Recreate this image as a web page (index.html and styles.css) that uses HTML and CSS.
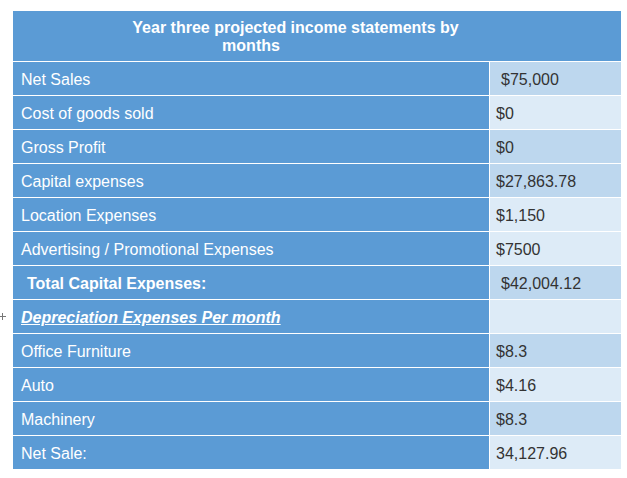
FILE: index.html
```html
<!DOCTYPE html>
<html>
<head>
<meta charset="utf-8">
<link rel="stylesheet" href="styles.css">
</head>
<body>
<div class="wrap">
  <svg class="handle" width="8" height="9" viewBox="0 0 8 9"><path d="M0 4.5H7M3.5 1V8" stroke="#777" stroke-width="1"/></svg>
  <div class="table">
    <div class="head">
      <div class="title">
        <span class="l1">Year three projected income statements by</span>
        <span class="l2">months</span>
      </div>
    </div>
    <div class="lab">Net Sales</div><div class="val a indent">$75,000</div>
    <div class="lab">Cost of goods sold</div><div class="val b">$0</div>
    <div class="lab">Gross Profit</div><div class="val a">$0</div>
    <div class="lab">Capital expenses</div><div class="val a">$27,863.78</div>
    <div class="lab">Location Expenses</div><div class="val b">$1,150</div>
    <div class="lab">Advertising / Promotional Expenses</div><div class="val b">$7500</div>
    <div class="lab bold indent">Total Capital Expenses:</div><div class="val a indent">$42,004.12</div>
    <div class="lab dep">Depreciation Expenses Per month</div><div class="val b"></div>
    <div class="lab">Office Furniture</div><div class="val a">$8.3</div>
    <div class="lab">Auto</div><div class="val b">$4.16</div>
    <div class="lab">Machinery</div><div class="val a">$8.3</div>
    <div class="lab">Net Sale:</div><div class="val b">34,127.96</div>
  </div>
</div>
</body>
</html>
```
FILE: styles.css
```css
html, body {
  margin: 0;
  padding: 0;
  background: #ffffff;
}
body {
  font-family: "Liberation Sans", Arial, sans-serif;
  font-size: 16px;
}
.wrap {
  position: relative;
  padding: 11px 0 0 13px;
}
.handle {
  position: absolute;
  left: -1px;
  top: 312px;
}
.table {
  width: 608px;
  display: grid;
  grid-template-columns: 476px 131px;
  grid-template-rows: 50px;
  grid-auto-rows: 33px;
  gap: 1px;
  background: #ffffff;
}
.head {
  grid-column: 1 / 3;
  background: #5b9bd5;
  color: #ffffff;
  font-weight: bold;
  line-height: 18px;
  display: flex;
  align-items: center;
  padding-top: 2px;
  box-sizing: border-box;
}
.title {
  width: 476px;
  text-align: center;
}
.l1 { display: block; padding-left: 89px; }
.l2 { display: block; }
.lab {
  background: #5b9bd5;
  color: #ffffff;
  padding-left: 8px;
  padding-top: 2px;
  display: flex;
  align-items: center;
}
.val {
  color: #333333;
  padding-left: 6px;
  padding-top: 2px;
  display: flex;
  align-items: center;
}
.val.a { background: #bdd7ee; }
.val.b { background: #ddebf7; }
.val.indent { padding-left: 11px; }
.lab.indent { padding-left: 14px; }
.bold { font-weight: bold; }
.dep {
  font-weight: bold;
  font-style: italic;
  text-decoration: underline;
}
```
